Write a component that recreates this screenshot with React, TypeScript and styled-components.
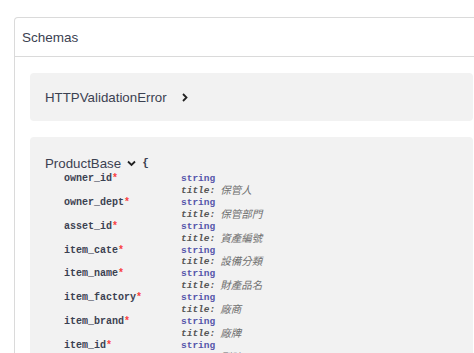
import React from "react";
import styled, { createGlobalStyle } from "styled-components";

const GlobalStyle = createGlobalStyle`
  html, body {
    margin: 0;
    padding: 0;
    background: #ffffff;
    overflow: hidden;
  }
  body {
    font-family: "Liberation Sans", Arial, sans-serif;
  }
`;

const Page = styled.div`
  padding: 17px 0 0 14px;
  width: 500px;
`;

const Section = styled.section`
  width: 474px;
  border: 1px solid #dadada;
  border-bottom: none;
  border-radius: 4px 4px 0 0;
`;

const SectionHeader = styled.h4`
  margin: 0;
  height: 38px;
  display: flex;
  align-items: center;
  padding-left: 7px;
  font-size: 13.5px;
  font-weight: 400;
  color: #3b4151;
  border-bottom: 1px solid #dadada;
`;

const SectionBody = styled.div`
  padding: 16px 16px 0 15px;
  display: flex;
  flex-direction: column;
  gap: 16px;
`;

const ModelBox = styled.div<{ $open?: boolean }>`
  background: #f2f2f2;
  border-radius: 4px;
  padding: ${({ $open }) => ($open ? "18px 15px 10px" : "0 15px")};
  height: ${({ $open }) => ($open ? "auto" : "48px")};
  display: flex;
  flex-direction: column;
  justify-content: ${({ $open }) => ($open ? "flex-start" : "center")};
`;

const TitleRow = styled.div`
  display: flex;
  align-items: center;
  height: 16px;
  font-size: 13.3px;
  color: #3b4151;
`;

const Toggle = styled.span<{ $gap: number }>`
  display: inline-flex;
  align-items: center;
  margin-left: ${({ $gap }) => $gap}px;
`;

const Brace = styled.span`
  margin-left: 6px;
  font-family: "Liberation Mono", "Courier New", monospace;
  font-size: 11px;
  font-weight: 700;
  color: #3b4151;
`;

const PropTable = styled.div`
  margin-top: 2px;
  padding-left: 19px;
  display: grid;
  grid-template-columns: 117px 1fr;
`;

const PropName = styled.div`
  font-family: "Liberation Mono", "Courier New", monospace;
  font-weight: 700;
  font-size: 10px;
  height: 11.93px;
  line-height: 11.93px;
  color: #3b4151;
`;

const Star = styled.span`
  color: #f93e3e;
`;

const PropInfo = styled.div`
  display: flex;
  flex-direction: column;
`;

const TypeLine = styled.div`
  font-family: "Liberation Mono", "Courier New", monospace;
  font-weight: 700;
  font-size: 9.5px;
  height: 11.93px;
  line-height: 11.93px;
  color: #55a;
`;

const TitleLine = styled.div`
  display: flex;
  align-items: center;
  gap: 5px;
  height: 11.93px;
  overflow: visible;
  color: #6b6b6b;
  font-style: italic;
`;

const TitleKey = styled.span`
  font-family: "Liberation Mono", "Courier New", monospace;
  font-weight: 700;
  font-size: 9.5px;
  line-height: 11.93px;
  color: #555;
`;

const TitleValue = styled.span`
  font-family: "Liberation Sans", "Noto Sans CJK TC", sans-serif;
  font-size: 10.5px;
  line-height: 11.93px;
  color: #6e6e6e;
`;

const ChevronRight = () => (
  <svg width="8" height="9" viewBox="0 0 8 9">
    <polyline points="2,1 5.5,4.5 2,8" fill="none" stroke="#222" strokeWidth="1.8" />
  </svg>
);

const ChevronDown = () => (
  <svg width="9" height="7" viewBox="0 0 9 7">
    <polyline points="1,1.5 4.5,5 8,1.5" fill="none" stroke="#222" strokeWidth="1.8" />
  </svg>
);

const props = [
  { name: "owner_id", title: "保管人" },
  { name: "owner_dept", title: "保管部門" },
  { name: "asset_id", title: "資產編號" },
  { name: "item_cate", title: "設備分類" },
  { name: "item_name", title: "財產品名" },
  { name: "item_factory", title: "廠商" },
  { name: "item_brand", title: "廠牌" },
  { name: "item_id", title: "型號" },
];

export default function App() {
  return (
    <>
      <GlobalStyle />
      <Page>
        <Section>
          <SectionHeader>Schemas</SectionHeader>
          <SectionBody>
            <ModelBox>
              <TitleRow>
                HTTPValidationError
                <Toggle $gap={14}>
                  <ChevronRight />
                </Toggle>
              </TitleRow>
            </ModelBox>
            <ModelBox $open>
              <TitleRow>
                ProductBase
                <Toggle $gap={6}>
                  <ChevronDown />
                </Toggle>
                <Brace>{"{"}</Brace>
              </TitleRow>
              <PropTable>
                {props.map((p) => (
                  <React.Fragment key={p.name}>
                    <PropName>
                      {p.name}
                      <Star>*</Star>
                    </PropName>
                    <PropInfo>
                      <TypeLine>string</TypeLine>
                      <TitleLine>
                        <TitleKey>title:</TitleKey>
                        <TitleValue>{p.title}</TitleValue>
                      </TitleLine>
                    </PropInfo>
                  </React.Fragment>
                ))}
              </PropTable>
            </ModelBox>
          </SectionBody>
        </Section>
      </Page>
    </>
  );
}
